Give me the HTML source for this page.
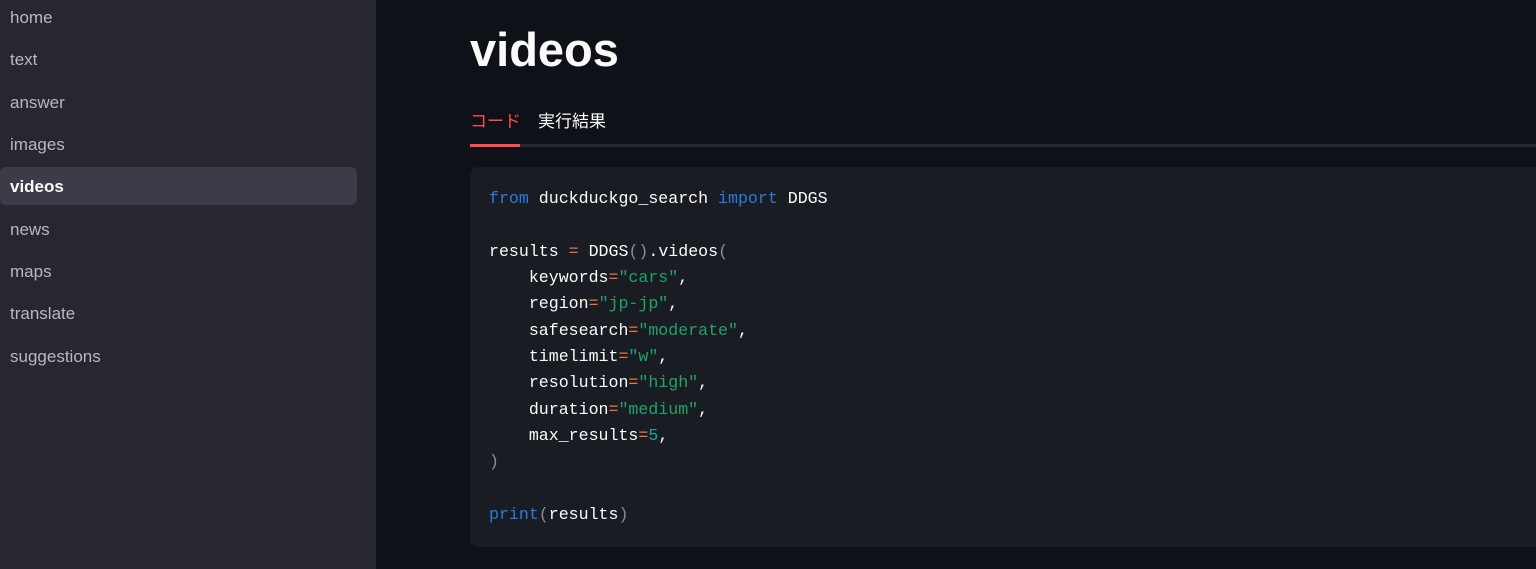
<!DOCTYPE html>
<html><head><meta charset="utf-8"><style>
body{margin:0;width:1536px;height:569px;overflow:hidden;background:#0e1117;font-family:"Liberation Sans","Noto Sans CJK JP",sans-serif;position:relative}
.side{position:absolute;left:0;top:0;width:376px;height:569px;background:#262730}
.item{position:absolute;left:10px;font-size:17px;color:#b8b9bf;line-height:20px}
.act{position:absolute;left:0;top:167px;width:357px;height:38px;background:#3b3c48;border-radius:6px}
h1{position:absolute;left:470px;top:20px;margin:0;font-size:47px;font-weight:bold;color:#fafafa;line-height:60px}
.tab{position:absolute;top:111px;font-size:17px;line-height:22px}
.line{position:absolute;left:470px;top:144px;width:1066px;height:3px;background:#262730}
.red{position:absolute;left:470px;top:144px;width:50px;height:3px;background:#ff4b4b}
.code{position:absolute;left:470px;top:167px;width:1080px;height:380px;background:#1a1c24;border-radius:8px}
pre{position:absolute;left:489px;top:186px;margin:0;font-family:"Liberation Mono",monospace;font-size:16.6px;line-height:26.33px;color:#fafafa}
.k{color:#2a7bde}.s{color:#21a366}.o{color:#e8763b}.n{color:#21a3a3}.p{color:#8a8c96}
</style></head><body>
<div class="side">
<div class="act"></div>
<div class="item" style="top:8px">home</div>
<div class="item" style="top:50px">text</div>
<div class="item" style="top:93px">answer</div>
<div class="item" style="top:135px">images</div>
<div class="item" style="top:177px;color:#fafafa;font-weight:bold">videos</div>
<div class="item" style="top:220px">news</div>
<div class="item" style="top:262px">maps</div>
<div class="item" style="top:304px">translate</div>
<div class="item" style="top:347px">suggestions</div>
</div>
<h1>videos</h1>
<div class="tab" style="left:470px;color:#ff4b4b">コード</div>
<div class="tab" style="left:538px;color:#fafafa">実行結果</div>
<div class="line"></div><div class="red"></div>
<div class="code"></div>
<pre><span class="k">from</span> duckduckgo_search <span class="k">import</span> DDGS

results <span class="o">=</span> DDGS<span class="p">()</span>.videos<span class="p">(</span>
    keywords<span class="o">=</span><span class="s">"cars"</span>,
    region<span class="o">=</span><span class="s">"jp-jp"</span>,
    safesearch<span class="o">=</span><span class="s">"moderate"</span>,
    timelimit<span class="o">=</span><span class="s">"w"</span>,
    resolution<span class="o">=</span><span class="s">"high"</span>,
    duration<span class="o">=</span><span class="s">"medium"</span>,
    max_results<span class="o">=</span><span class="n">5</span>,
<span class="p">)</span>

<span class="k">print</span><span class="p">(</span>results<span class="p">)</span></pre>
</body></html>
